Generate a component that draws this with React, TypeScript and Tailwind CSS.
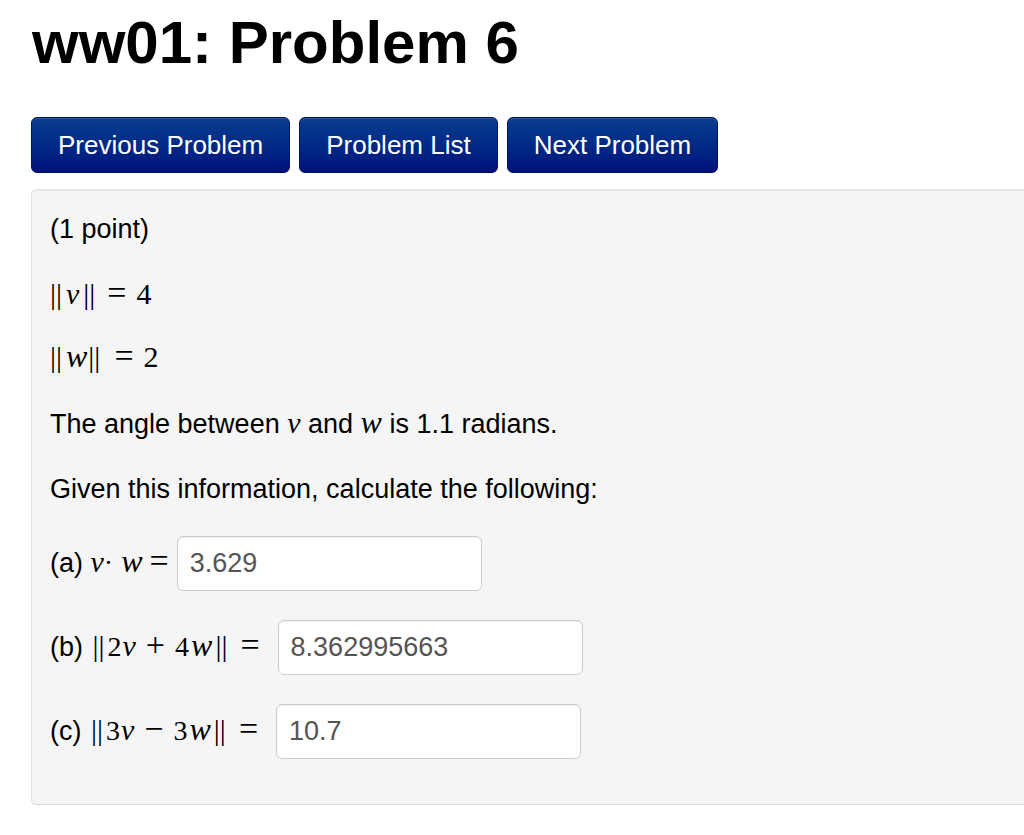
import React from 'react';

const serif = "font-['Liberation_Serif','Times_New_Roman',serif] leading-none";

// math pieces, laid out inline so they sit on one baseline
function V({ children, className = '' }: { children: React.ReactNode; className?: string }) {
    return <span className={`${serif} italic text-[30px] ${className}`}>{children}</span>;
}

function N({ children, className = '' }: { children: React.ReactNode; className?: string }) {
    return <span className={`${serif} text-[28px] ${className}`}>{children}</span>;
}

function Bars({ className = '' }: { className?: string }) {
    return <span className={`${serif} text-[30px] ${className}`}>||</span>;
}

function Op({ children }: { children: React.ReactNode }) {
    return <span className={`${serif} text-[34px] mx-[10px]`}>{children}</span>;
}

function Eq({ className = '' }: { className?: string }) {
    return <span className={`${serif} text-[34px] ${className}`}>=</span>;
}

function AnswerInput({ value }: { value: string }) {
    return (
        <input
            readOnly
            value={value}
            className="w-[305px] h-[55px] rounded-[6px] border border-[#cccccc] bg-white px-[12px] text-[27px] text-[#555555] shadow-[inset_0_1px_1px_rgba(0,0,0,0.075)] outline-none"
        />
    );
}

export default function App() {
    const buttons = ['Previous Problem', 'Problem List', 'Next Problem'];

    return (
        <div className="w-[1024px] h-[835px] overflow-hidden bg-white font-['Liberation_Sans',Arial,sans-serif] text-black pl-[31px]">
            <h1 className="mt-[10px] ml-[1px] text-[60px] leading-[66px] font-bold">ww01: Problem 6</h1>

            {/* nav buttons */}
            <div className="mt-[41px] flex gap-[9px]">
                {buttons.map((b) => (
                    <button
                        key={b}
                        className="h-[56px] px-[26px] rounded-[6px] border border-[#00105a] bg-gradient-to-b from-[#0b3d8f] to-[#000f7c] text-white text-[26px] shadow-[inset_0_1px_0_rgba(255,255,255,0.15)]"
                    >
                        {b}
                    </button>
                ))}
            </div>

            {/* problem body */}
            <div className="mt-[16px] w-[1010px] rounded-[5px] border border-[#e3e3e3] border-b-[#dadada] bg-[#f5f5f5] pl-[18px] pt-[21px] pb-[45px] text-[27px] shadow-[inset_0_1px_1px_rgba(0,0,0,0.05)]">
                <div className="h-[37px] flex items-center">(1 point)</div>

                <div className="mt-[29px] h-[37px] flex items-center">
                    <span>
                        <Bars />
                        <V className="ml-[4px]">v</V>
                        <Bars className="ml-[4px]" />
                        <Eq className="ml-[12px] mr-[10px]" />
                        <N className="text-[30px]">4</N>
                    </span>
                </div>

                <div className="mt-[26px] h-[37px] flex items-center">
                    <span>
                        <Bars />
                        <V className="ml-[4px] text-[32px]">w</V>
                        <Bars className="ml-[1px]" />
                        <Eq className="ml-[14px] mr-[10px]" />
                        <N className="text-[30px]">2</N>
                    </span>
                </div>

                <div className="mt-[29px] h-[37px] flex items-center">
                    <span className="whitespace-pre">
                        The angle between <V>v</V> and <V className="text-[32px]">w</V> is 1.1 radians.
                    </span>
                </div>

                <div className="mt-[28px] h-[37px] flex items-center">
                    Given this information, calculate the following:
                </div>

                <div className="mt-[28px] h-[55px] flex items-center">
                    <span className="whitespace-pre">
                        (a) <V>v</V>
                        <N>·</N>
                        <V className="ml-[8px] text-[32px]">w</V>
                        <Eq className="ml-[7px] text-[30px]" />
                    </span>
                    <span className="ml-[8px]">
                        <AnswerInput value="3.629" />
                    </span>
                </div>

                <div className="mt-[29px] h-[55px] flex items-center">
                    <span className="whitespace-pre">
                        (b) <Bars className="ml-[2px]" />
                        <N className="ml-[3px]">2</N>
                        <V className="ml-[1px]">v</V>
                        <Op>+</Op>
                        <N>4</N>
                        <V className="ml-[2px] text-[32px]">w</V>
                        <Bars className="ml-[3px]" />
                        <Eq className="ml-[13px]" />
                    </span>
                    <span className="ml-[18px]">
                        <AnswerInput value="8.362995663" />
                    </span>
                </div>

                <div className="mt-[29px] h-[55px] flex items-center">
                    <span className="whitespace-pre">
                        (c) <Bars className="ml-[2px]" />
                        <N className="ml-[3px]">3</N>
                        <V className="ml-[1px]">v</V>
                        <Op>−</Op>
                        <N>3</N>
                        <V className="ml-[2px] text-[32px]">w</V>
                        <Bars className="ml-[3px]" />
                        <Eq className="ml-[13px]" />
                    </span>
                    <span className="ml-[18px]">
                        <AnswerInput value="10.7" />
                    </span>
                </div>
            </div>
        </div>
    );
}
